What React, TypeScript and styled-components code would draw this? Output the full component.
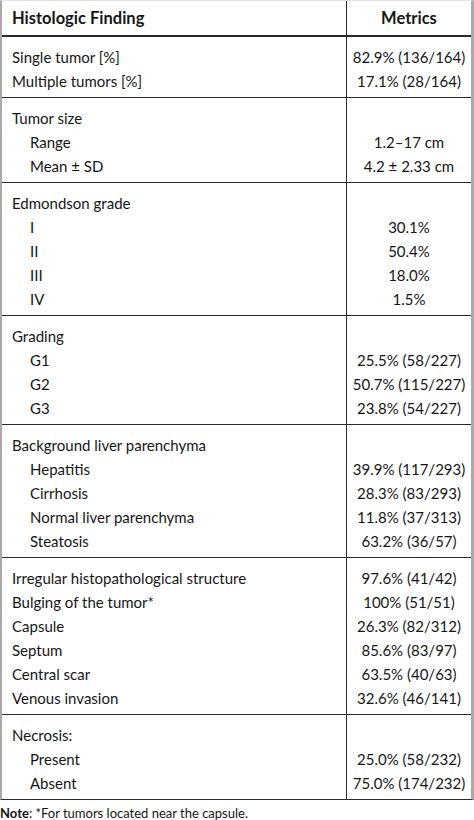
import React from 'react'
import styled, { createGlobalStyle } from 'styled-components'

const GlobalStyle = createGlobalStyle`
  html, body {
    margin: 0;
    padding: 0;
    background: #fff;
  }
  body {
    font-family: Lato, "Open Sans", sans-serif;
    color: #161616;
  }
`

const Frame = styled.div`
  width: 474px;
  box-sizing: border-box;
  border-left: 2px solid #a9a9a9;
  border-right: 3px solid #a9a9a9;
  border-top: 1px solid #e2e2e2;
  border-bottom: 1px solid #2a2a2a;
`

const Section = styled.div<{ $head?: boolean }>`
  display: grid;
  grid-template-columns: 344px 1fr;
  border-bottom: ${(p) => (p.$head ? '1px solid #2a2a2a' : 'none')};
  & + & {
    border-top: 1px solid #2a2a2a;
  }
`

const Col = styled.div<{ $head?: boolean; $right?: boolean }>`
  display: flex;
  flex-direction: column;
  padding: ${(p) => (p.$head ? '5px 0 5px' : '7.5px 0 4.5px')};
  border-left: ${(p) => (p.$right ? '1px solid #2a2a2a' : 'none')};
`

const Cell = styled.div<{ $indent?: boolean; $right?: boolean; $bold?: boolean }>`
  height: 24px;
  line-height: 24px;
  font-size: ${(p) => (p.$bold ? '16.5px' : '15px')};
  white-space: nowrap;
  padding-left: ${(p) => (p.$right ? '0' : p.$indent ? '28px' : '10px')};
  text-align: ${(p) => (p.$right ? 'center' : 'left')};
  font-weight: ${(p) => (p.$bold ? 700 : 400)};
`

const Note = styled.p`
  margin: 5px 0 0;
  font-size: 13px;
  line-height: 16px;
  color: #161616;
  b {
    font-weight: 700;
  }
`

type Row = [string, string, boolean?]

const groups: Row[][] = [
  [
    ['Single tumor [%]', '82.9% (136/164)'],
    ['Multiple tumors [%]', '17.1% (28/164)'],
  ],
  [
    ['Tumor size', ''],
    ['Range', '1.2–17 cm', true],
    ['Mean ± SD', '4.2 ± 2.33 cm', true],
  ],
  [
    ['Edmondson grade', ''],
    ['I', '30.1%', true],
    ['II', '50.4%', true],
    ['III', '18.0%', true],
    ['IV', '1.5%', true],
  ],
  [
    ['Grading', ''],
    ['G1', '25.5% (58/227)', true],
    ['G2', '50.7% (115/227)', true],
    ['G3', '23.8% (54/227)', true],
  ],
  [
    ['Background liver parenchyma', ''],
    ['Hepatitis', '39.9% (117/293)', true],
    ['Cirrhosis', '28.3% (83/293)', true],
    ['Normal liver parenchyma', '11.8% (37/313)', true],
    ['Steatosis', '63.2% (36/57)', true],
  ],
  [
    ['Irregular histopathological structure', '97.6% (41/42)'],
    ['Bulging of the tumor*', '100% (51/51)'],
    ['Capsule', '26.3% (82/312)'],
    ['Septum', '85.6% (83/97)'],
    ['Central scar', '63.5% (40/63)'],
    ['Venous invasion', '32.6% (46/141)'],
  ],
  [
    ['Necrosis:', ''],
    ['Present', '25.0% (58/232)', true],
    ['Absent', '75.0% (174/232)', true],
  ],
]

export default function App() {
  return (
    <>
      <GlobalStyle />
      <Frame>
        <Section $head>
          <Col $head>
            <Cell $bold>Histologic Finding</Cell>
          </Col>
          <Col $head $right>
            <Cell $bold $right>Metrics</Cell>
          </Col>
        </Section>
        {groups.map((rows, i) => (
          <Section key={i}>
            <Col>
              {rows.map(([label, , indent]) => (
                <Cell key={label} $indent={indent}>{label}</Cell>
              ))}
            </Col>
            <Col $right>
              {rows.map(([label, value]) => (
                <Cell key={label} $right>{value}</Cell>
              ))}
            </Col>
          </Section>
        ))}
      </Frame>
      <Note>
        <b>Note</b>: *For tumors located near the capsule.
      </Note>
    </>
  )
}
